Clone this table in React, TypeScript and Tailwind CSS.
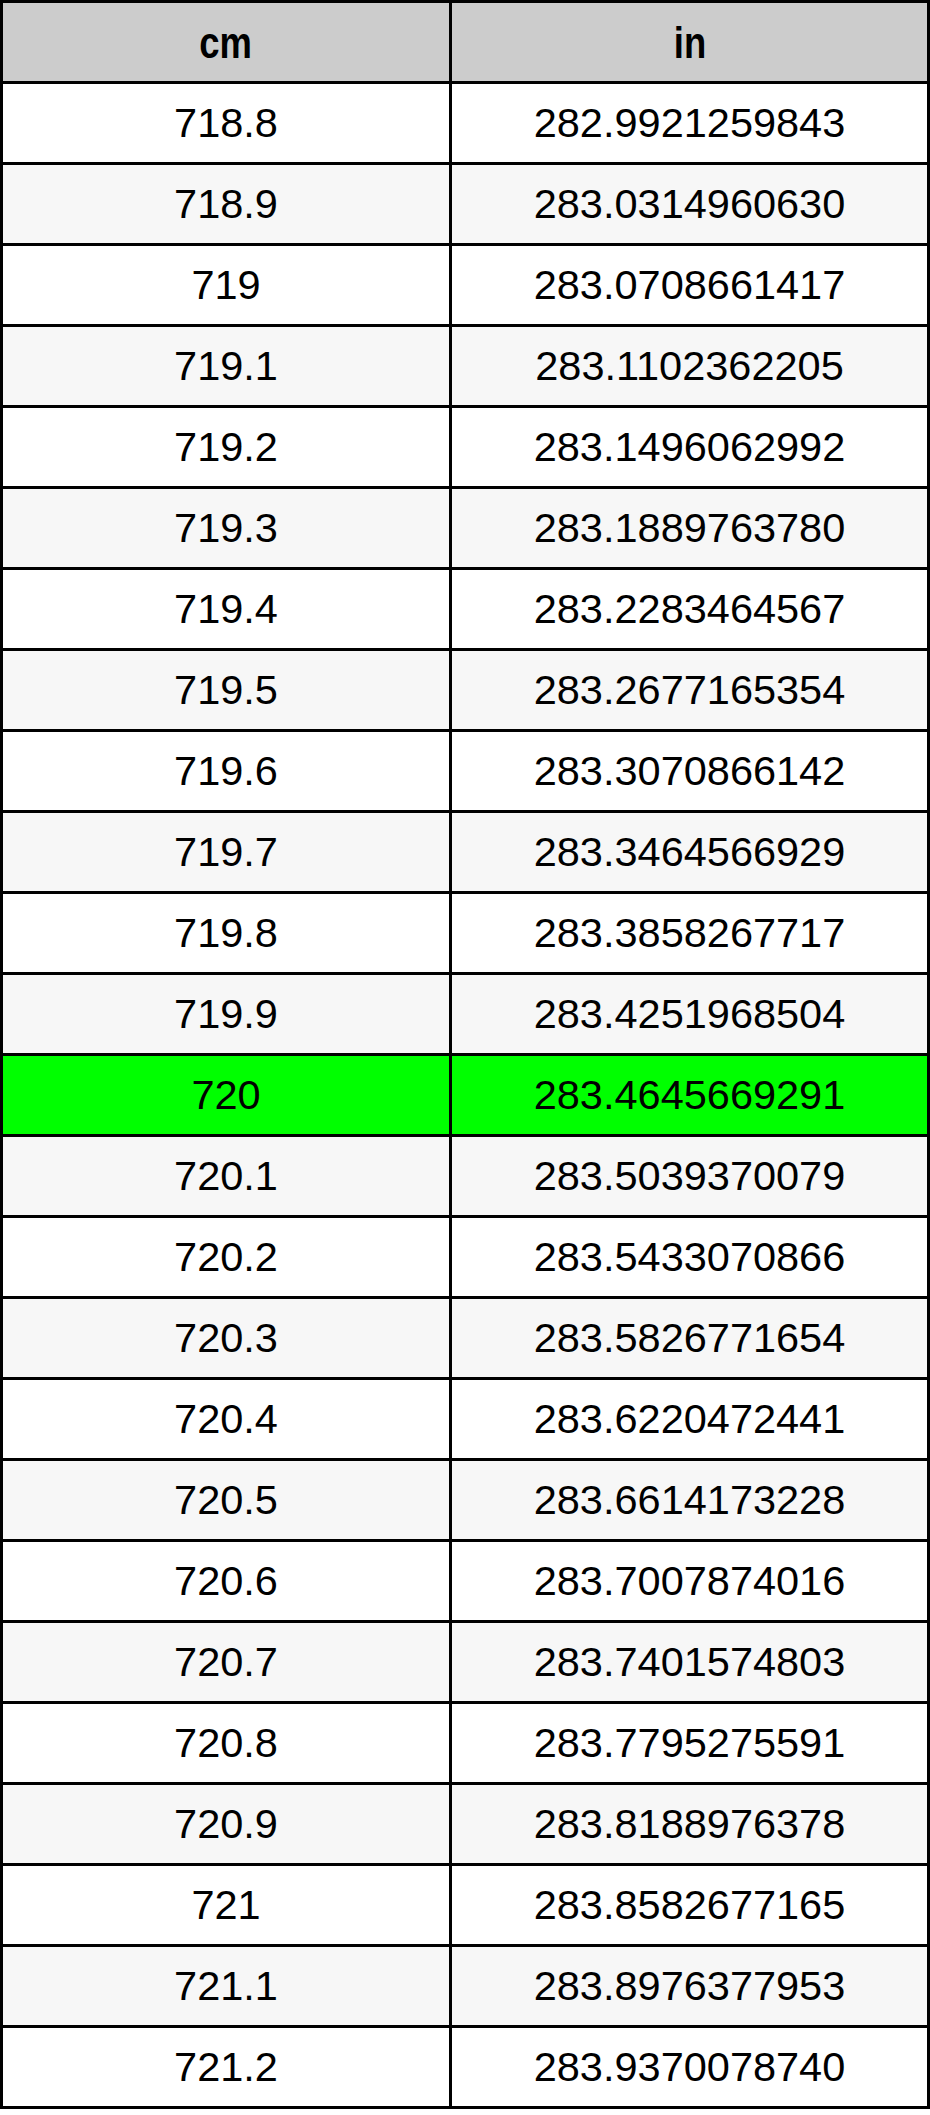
const rows: [string, string][] = [
  ["718.8", "282.9921259843"],
  ["718.9", "283.0314960630"],
  ["719", "283.0708661417"],
  ["719.1", "283.1102362205"],
  ["719.2", "283.1496062992"],
  ["719.3", "283.1889763780"],
  ["719.4", "283.2283464567"],
  ["719.5", "283.2677165354"],
  ["719.6", "283.3070866142"],
  ["719.7", "283.3464566929"],
  ["719.8", "283.3858267717"],
  ["719.9", "283.4251968504"],
  ["720", "283.4645669291"],
  ["720.1", "283.5039370079"],
  ["720.2", "283.5433070866"],
  ["720.3", "283.5826771654"],
  ["720.4", "283.6220472441"],
  ["720.5", "283.6614173228"],
  ["720.6", "283.7007874016"],
  ["720.7", "283.7401574803"],
  ["720.8", "283.7795275591"],
  ["720.9", "283.8188976378"],
  ["721", "283.8582677165"],
  ["721.1", "283.8976377953"],
  ["721.2", "283.9370078740"],
]

const App = () => {
  return (
    <div className="w-[930px] bg-white font-['Liberation_Sans',Arial,sans-serif] text-black">
      <div className="border-l-[3px] border-t-[3px] border-black">
        {/* header */}
        <div className="flex h-[81px] bg-[#cccccc]">
          <div className="box-border flex w-[449px] items-center justify-center border-b-[3px] border-r-[3px] border-black">
            <span className="inline-block scale-x-[0.81] text-[45px] font-bold leading-none">cm</span>
          </div>
          <div className="box-border flex flex-1 items-center justify-center border-b-[3px] border-r-[3px] border-black">
            <span className="inline-block scale-x-[0.81] text-[45px] font-bold leading-none">in</span>
          </div>
        </div>
        {rows.map(([cm, inch], i) => {
          const bg = cm === "720" ? "bg-[#00ff00]" : i % 2 === 0 ? "bg-white" : "bg-[#f7f7f7]"
          return (
            <div key={cm} className={`flex h-[81px] ${bg}`}>
              <div className="box-border flex w-[449px] items-center justify-center border-b-[3px] border-r-[3px] border-black text-[41.5px]">
                {cm}
              </div>
              <div className="box-border flex flex-1 items-center justify-center border-b-[3px] border-r-[3px] border-black text-[41.5px]">
                {inch}
              </div>
            </div>
          )
        })}
      </div>
    </div>
  )
}

export default App
